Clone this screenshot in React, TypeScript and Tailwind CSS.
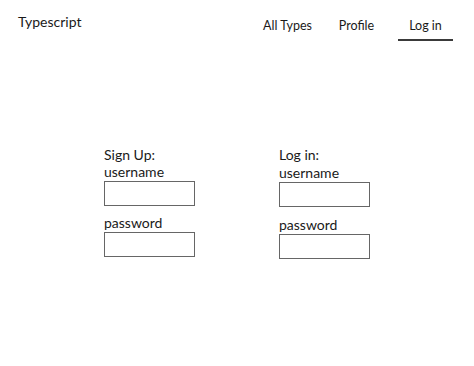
import React from 'react';

const Field: React.FC<{ label: string }> = ({ label }) => (
  <div className="flex flex-col">
    <span className="leading-[17px]">{label}</span>
    <div className="mt-[1px] h-[25px] w-[91px] border border-[#666] bg-white" />
  </div>
);

const App: React.FC = () => {
  const nav = ['All Types', 'Profile', 'Log in'];

  return (
    <div
      className="h-[366px] w-[474px] bg-white text-[14px] text-[#1a1a1a]"
      style={{ fontFamily: 'Lato, "Open Sans", sans-serif' }}
    >
      {/* Header */}
      <header className="flex items-start justify-between pl-[18px] pr-[21px]">
        <div className="pt-[13px] leading-[18px]">Typescript</div>
        <nav className="flex gap-[14px] pt-[17px] text-[12.5px]">
          {nav.map((item) => (
            <div key={item} className="flex w-[55px] flex-col items-center">
              <span className="leading-[17px]">{item}</span>
              <div
                className={
                  item === 'Log in'
                    ? 'mt-[5px] h-[2px] w-full bg-[#3a3a3a]'
                    : 'mt-[5px] h-[2px] w-full'
                }
              />
            </div>
          ))}
        </nav>
      </header>

      {/* Forms */}
      <main className="flex gap-[84px] pl-[104px] pt-[105px]">
        <div className="flex flex-col">
          <span className="leading-[17px]">Sign Up:</span>
          <div className="flex flex-col gap-[8px]">
            <Field label="username" />
            <Field label="password" />
          </div>
        </div>
        <div className="flex flex-col">
          <span className="leading-[17px]">Log in:</span>
          <div className="mt-[1px] flex flex-col gap-[9px]">
            <Field label="username" />
            <Field label="password" />
          </div>
        </div>
      </main>
    </div>
  );
};

export default App;
